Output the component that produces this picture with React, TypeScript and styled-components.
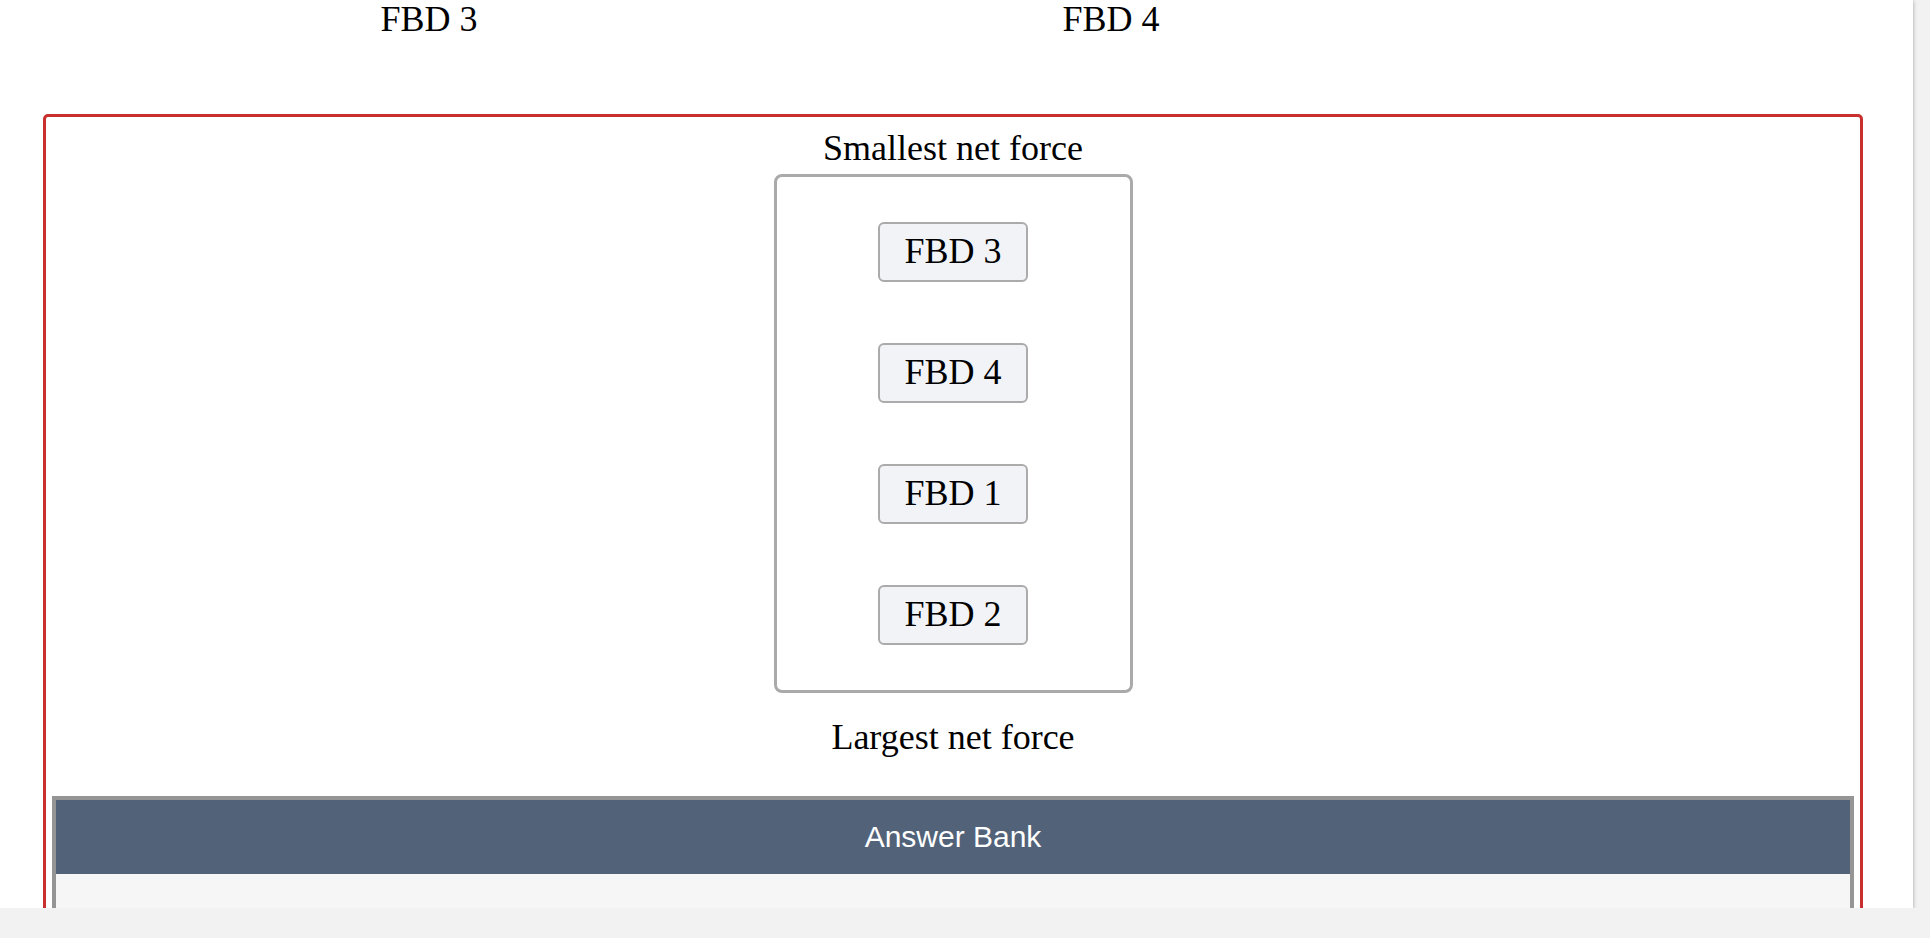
import React from 'react';
import styled, { createGlobalStyle } from 'styled-components';

// ---------
// PAGE
// ---------

let GlobalStyle = createGlobalStyle`
  html, body {
    margin: 0;
    padding: 0;
    background: #f2f2f2;
  }
`;

let Sheet = styled.div`
  width: 1913px;
  height: 908px;
  overflow: hidden;
  background: #fff;
  box-shadow: 0 1px 4px rgba(0, 0, 0, 0.35);
  font-family: 'Liberation Serif', 'Times New Roman', serif;
  font-size: 36px;
  color: #000;
`;

let CaptionRow = styled.div`
  display: grid;
  grid-template-columns: repeat(2, 682px);
  padding-left: 88px;
  margin-top: -1px;
  height: 115px;
`;

let Caption = styled.div`
  text-align: center;
  line-height: 40px;
`;

let captions = ['FBD 3', 'FBD 4'];

export default function App() {
  let [order, setOrder] = React.useState(['FBD 3', 'FBD 4', 'FBD 1', 'FBD 2']);

  function moveUp(index: number) {
    return () => {
      if (index === 0) return;
      let next = [...order];
      [next[index - 1], next[index]] = [next[index], next[index - 1]];
      setOrder(next);
    };
  }

  return (
    <React.Fragment>
      <GlobalStyle />
      <Sheet>
        <CaptionRow>
          {captions.map((c) => (
            <Caption key={c}>{c}</Caption>
          ))}
        </CaptionRow>
        <RankingQuestion order={order} onPick={moveUp} />
      </Sheet>
    </React.Fragment>
  );
}

// ---------
// RANKING
// ---------

let Question = styled.section`
  box-sizing: border-box;
  width: 1820px;
  margin-left: 43px;
  border: solid #c8302f 3px;
  border-radius: 5px;
  padding: 11px 6px 0;
  display: flex;
  flex-direction: column;
  align-items: center;
  min-height: 900px;
`;

let EndLabel = styled.div<{ gapBelow: number }>`
  line-height: 40px;
  margin-bottom: ${({ gapBelow }) => gapBelow}px;
`;

let Stack = styled.div`
  box-sizing: border-box;
  width: 359px;
  border: solid #aaaaaa 3px;
  border-radius: 8px;
  padding: 45px 0;
  margin-bottom: 24px;
  display: flex;
  flex-direction: column;
  align-items: center;
  gap: 61px;
`;

let Chip = styled.button`
  box-sizing: border-box;
  height: 60px;
  padding: 7px 24px 9px;
  border: solid #ababab 2px;
  border-radius: 6px;
  background: #f2f3f7;
  font: inherit;
  line-height: 40px;
  color: #000;
  cursor: grab;
`;

interface RankingProps {
  order: string[];
  onPick(index: number): () => void;
}

function RankingQuestion({ order, onPick }: RankingProps) {
  return (
    <Question>
      <EndLabel gapBelow={6}>Smallest net force</EndLabel>
      <Stack>
        {order.map((item, i) => (
          <Chip key={item} onClick={onPick(i)}>
            {item}
          </Chip>
        ))}
      </Stack>
      <EndLabel gapBelow={39}>Largest net force</EndLabel>
      <AnswerBank />
    </Question>
  );
}

// ---------
// ANSWER BANK
// ---------

let Bank = styled.div`
  box-sizing: border-box;
  width: 100%;
  border: solid #959595 4px;
  border-bottom: 0;
  background: #f6f6f6;
  min-height: 300px;
`;

let BankHeader = styled.div`
  height: 74px;
  background: #526379;
  color: #fff;
  font-family: 'Liberation Sans', Arial, sans-serif;
  font-size: 30px;
  display: flex;
  align-items: center;
  justify-content: center;
`;

function AnswerBank() {
  return (
    <Bank>
      <BankHeader>Answer Bank</BankHeader>
    </Bank>
  );
}
